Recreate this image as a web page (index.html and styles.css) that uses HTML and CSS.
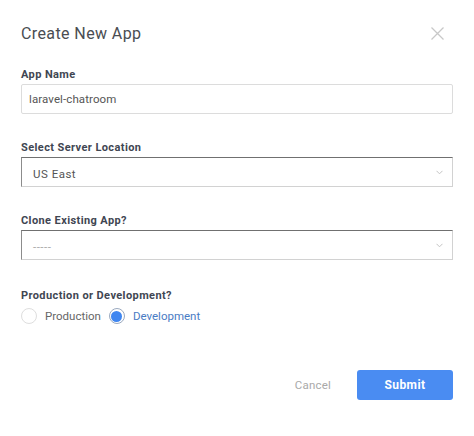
FILE: index.html
```html
<!DOCTYPE html>
<html>
<head>
<meta charset="utf-8">
<link rel="stylesheet" href="styles.css">
</head>
<body>
<div class="modal">
  <div class="header">
    <h1 class="title">Create New App</h1>
    <span class="close">
      <svg width="13" height="13" viewBox="0 0 13 13"><path d="M0.5 0.5L12.5 12.5M12.5 0.5L0.5 12.5" stroke="#c8c8c8" stroke-width="1.3" fill="none"/></svg>
    </span>
  </div>
  <div class="field">
    <div class="label">App Name</div>
    <div class="input">laravel-chatroom</div>
  </div>
  <div class="field">
    <div class="label">Select Server Location</div>
    <div class="select"><span>US East</span><svg class="chev" width="7" height="5" viewBox="0 0 7 5"><path d="M0.5 0.8L3.5 3.8L6.5 0.8" stroke="#c4c4c4" stroke-width="1" fill="none"/></svg></div>
  </div>
  <div class="field">
    <div class="label">Clone Existing App?</div>
    <div class="select"><span class="placeholder">-----</span><svg class="chev" width="7" height="5" viewBox="0 0 7 5"><path d="M0.5 0.8L3.5 3.8L6.5 0.8" stroke="#c4c4c4" stroke-width="1" fill="none"/></svg></div>
  </div>
  <div class="field last">
    <div class="label">Production or Development?</div>
    <div class="radios">
      <span class="radio"></span><span class="rlabel">Production</span>
      <span class="radio on"><span class="dot"></span></span><span class="rlabel on">Development</span>
    </div>
  </div>
  <div class="actions">
    <span class="cancel">Cancel</span>
    <span class="submit">Submit</span>
  </div>
</div>
</body>
</html>
```
FILE: styles.css
```css
html, body {
  margin: 0;
  padding: 0;
  background: #fff;
}
.modal {
  width: 474px;
  height: 436px;
  box-sizing: border-box;
  padding: 24px 21px 0 21px;
  font-family: Roboto, "Liberation Sans", sans-serif;
}
.header {
  display: flex;
  justify-content: space-between;
  align-items: center;
  height: 20px;
}
.title {
  margin: 0;
  font-size: 16px;
  line-height: 20px;
  font-weight: 400;
  color: #4a4d52;
  letter-spacing: 0.4px;
}
.close {
  display: flex;
  margin-right: 9px;
  margin-top: -1px;
}
.field {
  margin-top: 24px;
}
.field + .field {
  margin-top: 27px;
}
.field.last {
  margin-top: 29px;
}
.label {
  font-size: 11px;
  line-height: 14px;
  font-weight: 700;
  color: #3f4652;
  letter-spacing: 0.4px;
  margin-bottom: 2px;
}
.input {
  height: 30px;
  box-sizing: border-box;
  border: 1px solid #dcdcdc;
  border-radius: 2px;
  padding-left: 7px;
  font-size: 11.5px;
  line-height: 28px;
  color: #555;
  letter-spacing: 0.1px;
}
.select {
  height: 30px;
  box-sizing: border-box;
  border-top: 1px solid #707070;
  border-left: 1px solid #8c8c8c;
  border-right: 1px solid #d2d2d2;
  border-bottom: 1px solid #d2d2d2;
  padding: 3px 9px 0 11px;
  display: flex;
  align-items: center;
  justify-content: space-between;
  font-size: 11.5px;
  color: #555;
  letter-spacing: 0.5px;
}
.chev {
  margin-top: -3px;
}
.placeholder {
  color: #a8a8a8;
}
.radios {
  display: flex;
  align-items: center;
  margin-top: 5px;
}
.radio {
  width: 16px;
  height: 16px;
  box-sizing: border-box;
  border-radius: 50%;
  border: 1px solid #dedede;
  display: flex;
  align-items: center;
  justify-content: center;
}
.radio.on {
  border: 1px solid #9aa9bf;
  margin-left: 8px;
}
.dot {
  width: 11px;
  height: 11px;
  border-radius: 50%;
  background: #3f86f0;
}
.rlabel {
  font-size: 11.5px;
  color: #666;
  margin-left: 8px;
  letter-spacing: 0;
}
.rlabel.on {
  color: #4a7cc4;
}
.actions {
  display: flex;
  justify-content: flex-end;
  align-items: center;
  margin-top: 46px;
}
.cancel {
  font-size: 11.5px;
  color: #a9a9a9;
  letter-spacing: 0.2px;
  margin-right: 26px;
}
.submit {
  width: 96px;
  height: 30px;
  border-radius: 3px;
  background: #4a8cf2;
  color: #fff;
  font-weight: 700;
  font-size: 12px;
  letter-spacing: 0.4px;
  display: flex;
  align-items: center;
  justify-content: center;
}
```
